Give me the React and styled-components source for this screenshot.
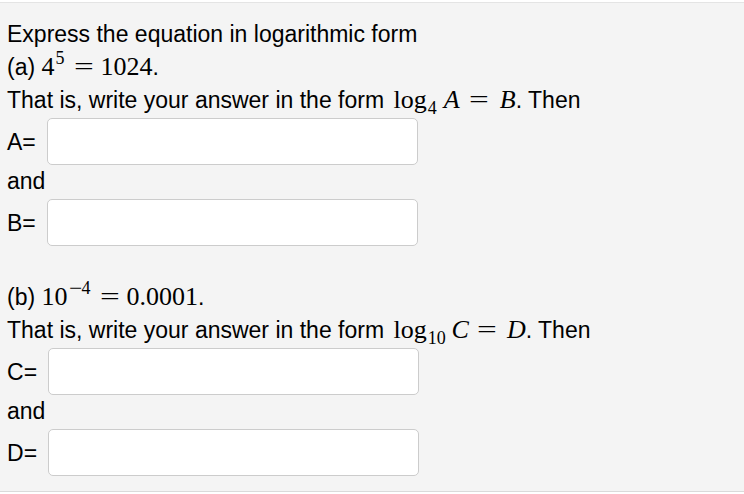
import React from 'react'
import styled, { createGlobalStyle } from 'styled-components'

const GlobalStyle = createGlobalStyle`
    html, body {
        margin: 0;
        padding: 0;
        background: #ffffff;
    }
`

const Panel = styled.div`
    margin-top: 2px;
    box-sizing: border-box;
    height: 490px;
    background: #f4f4f4;
    border-top: 1px solid #e4e4e4;
    border-bottom: 1px solid #dadada;
    padding: 15px 7px 15px;
    font-family: "Liberation Sans", Arial, sans-serif;
    font-size: 23px;
    line-height: 33px;
    color: #000;
`

const Line = styled.div`
    height: 33px;
    white-space: nowrap;
`

const Gap = styled.div`
    height: ${ ( { size } ) => size }px;
`

const Math = styled.span`
    font-family: "Liberation Serif", "Times New Roman", serif;
    font-size: 26px;
    line-height: 0;
    margin-left: ${ ( { lead } ) => lead || 0 }px;
`

// math italic letters are wider in the TeX font, so give them a box
const Italic = styled.span`
    font-style: italic;
    display: inline-block;
    width: ${ ( { w } ) => w }px;
    text-align: ${ ( { align } ) => align || 'center' };
`

const Rel = styled.span`
    display: inline-block;
    width: 20px;
    margin: 0 7px;
    text-align: center;
    transform: scaleX(1.35);
`

const Minus = styled.span`
    display: inline-block;
    width: 13px;
    text-align: center;
    transform: scaleX(1.3);
`

const Sup = styled.span`
    font-size: 18px;
    line-height: 0;
    position: relative;
    top: -11px;
    margin-left: 1px;
    margin-right: 2px;
`

const Sub = styled.span`
    font-size: 18px;
    line-height: 0;
    position: relative;
    top: 6px;
    margin-left: 1px;
    margin-right: 5px;
`

const Row = styled.div`
    display: flex;
    align-items: flex-start;
    gap: 11px;
    height: 48px;
`

const Label = styled.span`
    line-height: 48px;
    padding-top: 1px;
`

const Field = styled.input`
    box-sizing: border-box;
    margin-top: 1px;
    width: 371px;
    height: 47px;
    background: #ffffff;
    border: 1px solid #cccccc;
    border-radius: 5px;
    outline: none;
`

const Answer = ( { name } ) => <Row>
    <Label>{ name }=</Label>
    <Field type="text" aria-label={ name } />
</Row>

const LogForm = ( { base, left, right, leftWidth, rightWidth } ) => <Line>
    That is, write your answer in the form{ ' ' }
    <Math lead={ 3 }>
        log<Sub>{ base }</Sub>
        <Italic w={ leftWidth }>{ left }</Italic>
        <Rel>=</Rel>
        <Italic w={ rightWidth } align="right">{ right }</Italic>
    </Math>
    . Then
</Line>

export default function App() {
    return <>
        <GlobalStyle />
        <Panel>
            <Line>Express the equation in logarithmic form</Line>
            <Line>
                (a){ ' ' }
                <Math>4<Sup>5</Sup><Rel>=</Rel>1024</Math>.
            </Line>
            <LogForm base="4" left="A" right="B" leftWidth={ 20 } rightWidth={ 20 } />
            <Answer name="A" />
            <Line>and</Line>
            <Answer name="B" />
            <Gap size={ 35 } />
            <Line>
                (b){ ' ' }
                <Math>10<Sup><Minus>−</Minus>4</Sup><Rel>=</Rel>0.0001</Math>.
            </Line>
            <LogForm base="10" left="C" right="D" leftWidth={ 19 } rightWidth={ 22 } />
            <Answer name="C" />
            <Line>and</Line>
            <Answer name="D" />
        </Panel>
    </>
}
